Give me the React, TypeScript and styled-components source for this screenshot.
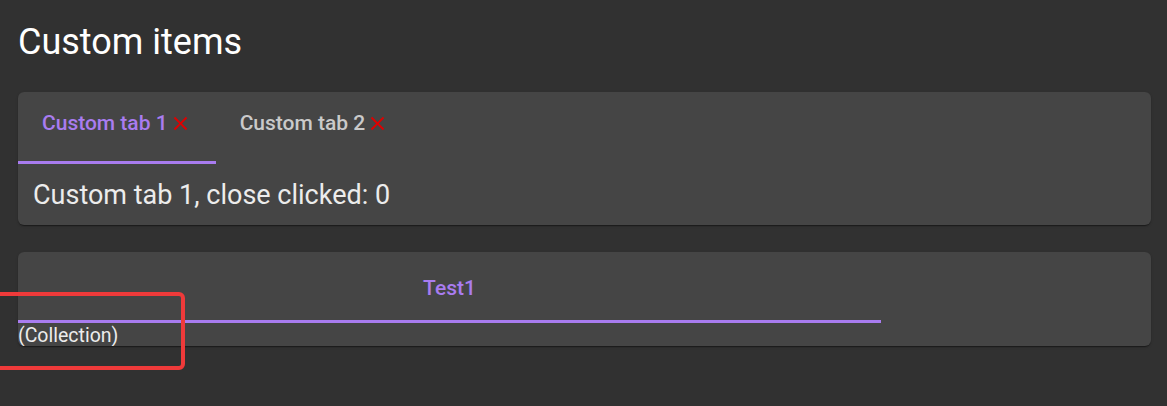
import React from "react";
import styled, { createGlobalStyle } from "styled-components";

const GlobalStyle = createGlobalStyle`
  html, body {
    margin: 0;
    padding: 0;
    background: #313131;
  }
  body {
    font-family: Roboto, "Liberation Sans", Arial, sans-serif;
    color: #ffffff;
    overflow: hidden;
  }
`;

const PURPLE = "#a97cf0";

const Page = styled.div`
  position: relative;
  padding: 18px 16px 40px 18px;
  min-height: 406px;
  box-sizing: border-box;
`;

const Title = styled.h1`
  margin: 0 0 26px;
  font-size: 36px;
  font-weight: 400;
  line-height: 48px;
  color: #ffffff;
`;

const Card = styled.section`
  background: #454545;
  border-radius: 6px;
  margin-bottom: 27px;
  overflow: hidden;
  box-shadow: 0 2px 1px -1px rgba(0, 0, 0, 0.25), 0 1px 1px 0 rgba(0, 0, 0, 0.16),
    0 1px 3px 0 rgba(0, 0, 0, 0.14);
`;

const TabBar = styled.div<{ $height: number }>`
  display: flex;
  height: ${(p) => p.$height}px;
`;

const Tab = styled.button<{ $active?: boolean; $width?: number; $lift?: number }>`
  display: flex;
  align-items: center;
  justify-content: center;
  gap: 1px;
  box-sizing: border-box;
  height: 100%;
  ${(p) => (p.$width ? `width: ${p.$width}px;` : "")}
  padding: 0 24px ${(p) => p.$lift ?? 0}px;
  margin: 0;
  border: none;
  background: transparent;
  font-family: Roboto, "Liberation Sans", Arial, sans-serif;
  font-size: 21px;
  font-weight: 500;
  color: ${(p) => (p.$active ? PURPLE : "rgba(255,255,255,0.72)")};
  box-shadow: ${(p) => (p.$active ? `inset 0 -3px 0 ${PURPLE}` : "none")};
  cursor: pointer;
`;

const CloseIcon = styled.svg`
  width: 23px;
  height: 23px;
  flex: none;
  fill: #e00000;
`;

const Content = styled.div`
  padding: 11px 15px 10px;
  font-size: 27px;
  line-height: 40px;
  color: #ececec;
`;

const CollectionText = styled.div`
  padding-top: 2px;
  font-size: 19.5px;
  line-height: 21px;
  color: #ececec;
`;

const Highlight = styled.div`
  position: absolute;
  left: -12px;
  top: 292px;
  width: 197px;
  height: 78px;
  box-sizing: border-box;
  border: 4px solid #ef3a3a;
  border-radius: 6px;
  pointer-events: none;
`;

const Close = () => (
  <CloseIcon viewBox="0 0 24 24" aria-hidden="true">
    <path d="M19 6.41 17.59 5 12 10.59 6.41 5 5 6.41 10.59 12 5 17.59 6.41 19 12 13.41 17.59 19 19 17.59 13.41 12z" />
  </CloseIcon>
);

export default function App() {
  return (
    <>
      <GlobalStyle />
      <Page>
        <Title>Custom items</Title>
        <Card>
          <TabBar $height={72}>
            <Tab $active $lift={10}>
              <span>Custom tab 1</span>
              <Close />
            </Tab>
            <Tab $lift={10}>
              <span>Custom tab 2</span>
              <Close />
            </Tab>
          </TabBar>
          <Content>Custom tab 1, close clicked: 0</Content>
        </Card>
        <Card>
          <TabBar $height={71}>
            <Tab $active $width={863}>
              Test1
            </Tab>
          </TabBar>
          <CollectionText>(Collection)</CollectionText>
        </Card>
        <Highlight />
      </Page>
    </>
  );
}
